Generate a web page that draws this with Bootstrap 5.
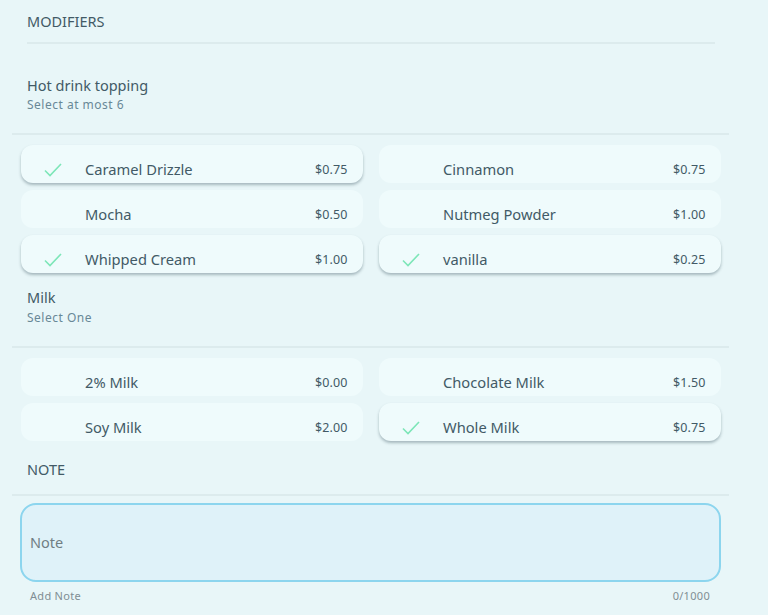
<!DOCTYPE html>
<html lang="en">
<head>
    <meta charset="UTF-8">
    <meta name="viewport" content="width=device-width, initial-scale=1">
    <title>Modifiers</title>
    <link href="https://cdn.jsdelivr.net/npm/bootstrap@5.3.0/dist/css/bootstrap.min.css" rel="stylesheet">
    <style>
        html, body {
            height: 615px;
            overflow: hidden;
        }
        body {
            background: #e8f6f8;
            color: #425a66;
            font-family: "Noto Sans", sans-serif;
            font-size: 14.5px;
        }
        .page {
            width: 768px;
            padding: 0 39px 0 12px;
        }
        .title-top {
            height: 44px;
            margin: 0 14px 0 15px;
            padding-top: 11px;
            line-height: 20px;
            border-bottom: 2px solid #dcebed;
        }
        .group-head {
            padding-left: 15px;
            border-bottom: 2px solid #dcebed;
        }
        .group-head.first {
            height: 91px;
            padding-top: 31px;
        }
        .group-head.second {
            height: 75px;
            padding-top: 14px;
        }
        .group-name {
            font-size: 14.5px;
            line-height: 21px;
        }
        .group-hint {
            font-size: 12px;
            letter-spacing: .5px;
            line-height: 17px;
            color: #688897;
        }
        .group-head.second .group-hint {
            margin-top: 1px;
        }
        .tiles {
            display: grid;
            grid-template-columns: 342px 342px;
            column-gap: 16px;
            row-gap: 7px;
            margin: 10px 0 0 8.5px;
        }
        .tile {
            height: 38px;
            border-radius: 12px;
            background: #effbfc;
            overflow: hidden;
        }
        .tile.on {
            box-shadow: 0 2px 3px rgba(40, 70, 80, .35);
        }
        .tile-row {
            height: 20px;
            margin-top: 14px;
        }
        .tile-check {
            width: 64.5px;
            padding-left: 23.5px;
        }
        .tile-check svg {
            display: block;
            margin-top: 2px;
        }
        .tile-name {
            font-size: 14.7px;
            line-height: 20px;
        }
        .tile-price {
            font-size: 12.5px;
            letter-spacing: .1px;
            line-height: 20px;
            padding: 2px 15px 0 0;
        }
        .note-head {
            height: 55px;
            padding: 18px 0 0 15px;
            line-height: 20px;
            border-bottom: 2px solid #dcebed;
        }
        .note-box {
            display: block;
            width: 701px;
            height: 79px;
            margin: 7px 0 0 8px;
            padding: 27px 8px 0;
            line-height: 20px;
            font-size: 14.5px;
            color: #425a66;
            background: #dff2f9;
            border: 2px solid #8cd5ee;
            border-radius: 16px;
            resize: none;
            outline: none;
        }
        .note-box::placeholder {
            color: #707e84;
            opacity: 1;
        }
        .note-foot {
            width: 701px;
            margin: 6px 0 0 8px;
            padding: 0 11px 0 10px;
            font-size: 11px;
            letter-spacing: .3px;
            line-height: 16px;
            color: #808e94;
        }
    </style>
</head>
<body>
<div class="page">
    <div class="title-top">MODIFIERS</div>

    <!-- first group -->
    <div class="group-head first">
        <div class="group-name">Hot drink topping</div>
        <div class="group-hint">Select at most 6</div>
    </div>
    <div class="tiles">
        <div class="tile on"><div class="tile-row d-flex align-items-center">
            <div class="tile-check"><svg width="18" height="14" viewBox="0 0 18 14" fill="none" stroke="#7de6b8" stroke-width="1.6"><path d="M1 7.5l5 5L17 1"/></svg></div>
            <div class="tile-name flex-grow-1">Caramel Drizzle</div><div class="tile-price">$0.75</div>
        </div></div>
        <div class="tile"><div class="tile-row d-flex align-items-center">
            <div class="tile-check"></div>
            <div class="tile-name flex-grow-1">Cinnamon</div><div class="tile-price">$0.75</div>
        </div></div>
        <div class="tile"><div class="tile-row d-flex align-items-center">
            <div class="tile-check"></div>
            <div class="tile-name flex-grow-1">Mocha</div><div class="tile-price">$0.50</div>
        </div></div>
        <div class="tile"><div class="tile-row d-flex align-items-center">
            <div class="tile-check"></div>
            <div class="tile-name flex-grow-1">Nutmeg Powder</div><div class="tile-price">$1.00</div>
        </div></div>
        <div class="tile on"><div class="tile-row d-flex align-items-center">
            <div class="tile-check"><svg width="18" height="14" viewBox="0 0 18 14" fill="none" stroke="#7de6b8" stroke-width="1.6"><path d="M1 7.5l5 5L17 1"/></svg></div>
            <div class="tile-name flex-grow-1">Whipped Cream</div><div class="tile-price">$1.00</div>
        </div></div>
        <div class="tile on"><div class="tile-row d-flex align-items-center">
            <div class="tile-check"><svg width="18" height="14" viewBox="0 0 18 14" fill="none" stroke="#7de6b8" stroke-width="1.6"><path d="M1 7.5l5 5L17 1"/></svg></div>
            <div class="tile-name flex-grow-1">vanilla</div><div class="tile-price">$0.25</div>
        </div></div>
    </div>

    <!-- second group -->
    <div class="group-head second">
        <div class="group-name">Milk</div>
        <div class="group-hint">Select One</div>
    </div>
    <div class="tiles">
        <div class="tile"><div class="tile-row d-flex align-items-center">
            <div class="tile-check"></div>
            <div class="tile-name flex-grow-1">2% Milk</div><div class="tile-price">$0.00</div>
        </div></div>
        <div class="tile"><div class="tile-row d-flex align-items-center">
            <div class="tile-check"></div>
            <div class="tile-name flex-grow-1">Chocolate Milk</div><div class="tile-price">$1.50</div>
        </div></div>
        <div class="tile"><div class="tile-row d-flex align-items-center">
            <div class="tile-check"></div>
            <div class="tile-name flex-grow-1">Soy Milk</div><div class="tile-price">$2.00</div>
        </div></div>
        <div class="tile on"><div class="tile-row d-flex align-items-center">
            <div class="tile-check"><svg width="18" height="14" viewBox="0 0 18 14" fill="none" stroke="#7de6b8" stroke-width="1.6"><path d="M1 7.5l5 5L17 1"/></svg></div>
            <div class="tile-name flex-grow-1">Whole Milk</div><div class="tile-price">$0.75</div>
        </div></div>
    </div>

    <!-- note -->
    <div class="note-head">NOTE</div>
    <textarea class="note-box" placeholder="Note"></textarea>
    <div class="note-foot d-flex justify-content-between">
        <span>Add Note</span><span>0/1000</span>
    </div>
</div>
<script src="https://cdn.jsdelivr.net/npm/bootstrap@5.3.0/dist/js/bootstrap.bundle.min.js"></script>
</body>
</html>
